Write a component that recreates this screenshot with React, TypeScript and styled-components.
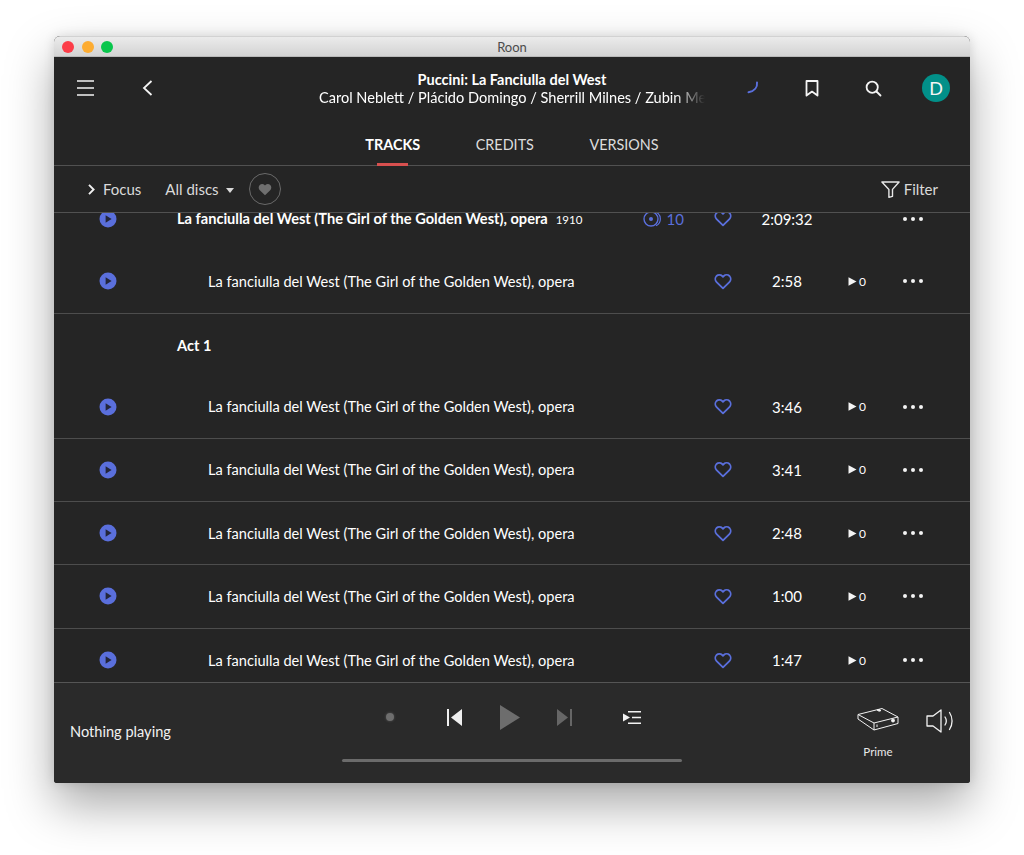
import React from "react";
import styled, { createGlobalStyle } from "styled-components";

const BLUE = "#5a6fdc";

const GlobalStyle = createGlobalStyle`
    html, body {
        margin: 0;
        background: #fff;
    }
    body {
        padding: 36px 54px 72px;
        font-family: Lato, "Liberation Sans", sans-serif;
        -webkit-font-smoothing: antialiased;
    }
`;

const Window = styled.div`
    width: 916px;
    height: 747px;
    display: flex;
    flex-direction: column;
    border-radius: 6px 6px 3px 3px;
    background: #252525;
    box-shadow: 0 22px 48px rgba(0, 0, 0, 0.34), 0 0 12px rgba(0, 0, 0, 0.12);
    overflow: hidden;
`;

const TitleBar = styled.div`
    height: 21px;
    flex: none;
    display: flex;
    align-items: center;
    justify-content: center;
    position: relative;
    background: linear-gradient(#ebebeb, #d3d3d3);
    border-top: 1px solid #d2d2d2;
    border-bottom: 1px solid #b9b9b9;
    box-sizing: border-box;
    color: #4c4c4c;
    font-size: 13px;
`;

const Lights = styled.div`
    position: absolute;
    left: 8px;
    top: 4px;
    display: flex;
    gap: 7.5px;
`;

const Light = styled.span<{ $color: string }>`
    width: 12px;
    height: 12px;
    border-radius: 50%;
    background: ${(p) => p.$color};
`;

const Header = styled.header`
    flex: none;
    height: 109px;
    display: flex;
    flex-direction: column;
    border-bottom: 1px solid #515151;
    box-sizing: border-box;
`;

const TopBar = styled.div`
    height: 63px;
    display: grid;
    grid-template-columns: 265px 386px 265px;
    align-items: center;
`;

const LeftActions = styled.div`
    display: flex;
    align-items: center;
    padding-left: 23px;
    gap: 48px;
    margin-top: -1px;
`;

const RightActions = styled.div`
    display: flex;
    align-items: center;
    padding-left: 38px;
    margin-top: -1px;
`;

const IconSlot = styled.div<{ $gap: number }>`
    width: 20px;
    margin-left: ${(p) => p.$gap}px;
    display: flex;
    justify-content: center;
    align-items: center;
    color: #f2f2f2;
`;

const Avatar = styled.div`
    width: 28px;
    height: 28px;
    margin-left: 39px;
    flex: none;
    border-radius: 50%;
    background: #029089;
    color: #f4f4f4;
    font-size: 18px;
    display: flex;
    align-items: center;
    justify-content: center;
`;

const TitleBlock = styled.div`
    min-width: 0;
    text-align: center;
    color: #fff;
    margin-top: 1px;
`;

const AlbumTitle = styled.div`
    font-size: 14.5px;
    font-weight: 700;
    line-height: 18px;
`;

const Artists = styled.div`
    font-size: 14.55px;
    line-height: 18px;
    white-space: nowrap;
    overflow: hidden;
    text-align: left;
    -webkit-mask-image: linear-gradient(to right, #000 92%, transparent 100%);
    mask-image: linear-gradient(to right, #000 92%, transparent 100%);
`;

const Tabs = styled.nav`
    flex: 1;
    display: flex;
    justify-content: center;
    gap: 55.5px;
`;

const Tab = styled.div<{ $active?: boolean }>`
    position: relative;
    font-size: 14.4px;
    line-height: 18px;
    padding-top: 16px;
    color: ${(p) => (p.$active ? "#fff" : "#dcdcdc")};
    font-weight: ${(p) => (p.$active ? 700 : 400)};

    ${(p) =>
        p.$active &&
        `&::after {
            content: "";
            position: absolute;
            left: 12px;
            right: 12px;
            bottom: -1px;
            height: 3px;
            background: #d8504f;
        }`}
`;

const Toolbar = styled.div`
    flex: none;
    height: 47px;
    display: flex;
    align-items: center;
    box-sizing: border-box;
    border-bottom: 1px solid #515151;
    padding: 0 32px 0 34px;
    font-size: 15px;
    color: #dadada;
    position: relative;
    z-index: 1;
    background: #252525;
`;

const ToolItem = styled.div`
    display: flex;
    align-items: center;
`;

const FocusLabel = styled(ToolItem)`
    gap: 8px;
    margin-right: 24px;
`;

const DiscsLabel = styled(ToolItem)`
    gap: 7px;
    margin-right: 15px;
`;

const FilterLabel = styled(ToolItem)`
    margin-left: auto;
    gap: 4px;
`;

const CaretDown = styled.span`
    width: 0;
    height: 0;
    border-left: 4.5px solid transparent;
    border-right: 4.5px solid transparent;
    border-top: 5px solid #dadada;
    margin-top: 2px;
`;

const HeartCircle = styled.div`
    width: 32px;
    height: 32px;
    border: 1px solid #6a6a6a;
    border-radius: 50%;
    box-sizing: border-box;
    display: flex;
    align-items: center;
    justify-content: center;
`;

const List = styled.div`
    flex: 1;
    min-height: 0;
    overflow: hidden;
`;

const ListInner = styled.div`
    margin-top: -26px;
`;

const Row = styled.div<{ $border?: boolean }>`
    height: 63.25px;
    box-sizing: border-box;
    display: grid;
    grid-template-columns: 45px 18px 586px 40px 88px 52px 60px 27px;
    align-items: center;
    border-bottom: ${(p) => (p.$border ? "1px solid #4d4d4d" : "none")};
    color: #fff;
    font-size: 15px;

    & > * {
        grid-row: 1;
    }
`;

const SectionRow = styled(Row)`
    height: 62px;
    padding-top: 2px;
`;

const PlayCell = styled.div`
    grid-column: 2;
    display: flex;
`;

const TrackName = styled.div<{ $indent: number; $bold?: boolean }>`
    grid-column: 3;
    padding-left: ${(p) => p.$indent}px;
    font-weight: ${(p) => (p.$bold ? 700 : 400)};
    white-space: nowrap;
    font-size: 14.6px;
`;

const Year = styled.span`
    font-size: 11.5px;
    margin-left: 8px;
    font-weight: 400;
`;

const Versions = styled.div`
    grid-column: 3;
    justify-self: end;
    display: flex;
    align-items: center;
    gap: 4px;
    color: ${BLUE};
    font-size: 15px;
    margin-right: 19px;
`;

const HeartCell = styled.div`
    grid-column: 4;
    display: flex;
    justify-content: center;
`;

const Duration = styled.div`
    grid-column: 5;
    text-align: center;
    font-size: 15px;
`;

const PlayCount = styled.div`
    grid-column: 6;
    display: flex;
    align-items: center;
    justify-content: center;
    gap: 2px;
    font-size: 12px;
`;

const MoreCell = styled.div`
    grid-column: 7;
    display: flex;
    justify-content: center;
    gap: 4px;
`;

const Dot = styled.span`
    width: 4px;
    height: 4px;
    border-radius: 50%;
    background: #f4f4f4;
`;

const Footer = styled.footer`
    flex: none;
    height: 101px;
    box-sizing: border-box;
    border-top: 1px solid #555;
    background: #2a2a2a;
    display: grid;
    grid-template-columns: 270px 376px 270px;
    position: relative;
    z-index: 1;
`;

const NowPlaying = styled.div`
    padding: 40px 0 0 16px;
    font-size: 14.6px;
    line-height: 18px;
    color: #f2f2f2;
`;

const Center = styled.div`
    display: flex;
    flex-direction: column;
    align-items: center;
`;

const Transport = styled.div`
    height: 66px;
    width: 100%;
    display: flex;
    align-items: center;
    padding-top: 2px;
    box-sizing: border-box;
`;

const TransportSlot = styled.div<{ $left: number }>`
    margin-left: ${(p) => p.$left}px;
    width: 20px;
    display: flex;
    justify-content: center;
`;

const RecDot = styled.span`
    width: 8px;
    height: 8px;
    border-radius: 50%;
    background: #6e6e6e;
    box-shadow: 0 0 2px 1px #3e3e3e;
`;

const Progress = styled.div`
    width: 340px;
    height: 3px;
    border-radius: 2px;
    background: #6b6b6b;
    margin-top: 10px;
`;

const Outputs = styled.div`
    display: flex;
    justify-content: flex-end;
    padding: 24px 15px 0 0;
    gap: 27px;
    color: #e8e8e8;
`;

const Device = styled.div`
    display: flex;
    flex-direction: column;
    align-items: center;
    gap: 14px;
    font-size: 11.5px;
    line-height: 14px;
`;

const VolumeSlot = styled.div`
    padding-top: 2px;
`;

const PlayCircle = () => (
    <svg width="18" height="18" viewBox="0 0 18 18">
        <circle cx="9" cy="9" r="8.5" fill={BLUE} />
        <path d="M6.6 5.2 12.6 9l-6 3.8z" fill="#23263a" />
    </svg>
);

const HeartOutline = ({ color = BLUE }: { color?: string }) => (
    <svg width="18" height="17" viewBox="0 0 18 17" fill="none">
        <path
            d="M9 15.4 2.600 9.100C.9 7.400.9 4.700 2.500 3c1.600-1.600 4.100-1.600 5.700 0l.8.900.8-.900c1.600-1.600 4.100-1.600 5.700 0 1.600 1.700 1.600 4.400-.1 6.100z"
            stroke={color}
            strokeWidth="1.8"
            strokeLinejoin="round"
        />
    </svg>
);

const HeartSolid = () => (
    <svg width="14" height="13" viewBox="0 0 18 17">
        <path
            d="M9 16 2.200 9.400C.3 7.500.3 4.500 2.100 2.600c1.800-1.800 4.600-1.800 6.300 0l.6.700.6-.7c1.700-1.800 4.500-1.800 6.300 0 1.800 1.900 1.800 4.900-.1 6.800z"
            fill="#6f6f6f"
        />
    </svg>
);

const Menu = () => (
    <svg width="17" height="16" viewBox="0 0 17 16" stroke="#f4f4f4" strokeWidth="1.6">
        <path d="M0 1h17M0 8h17M0 15h17" />
    </svg>
);

const Back = () => (
    <svg width="11" height="16" viewBox="0 0 11 16" fill="none" stroke="#f4f4f4" strokeWidth="1.8">
        <path d="M9.500 1 2 8l7.500 7" />
    </svg>
);

const Spinner = () => (
    <svg width="12" height="14" viewBox="0 0 12 14" fill="none" stroke={BLUE} strokeWidth="2" strokeLinecap="round">
        <path d="M10 1.500c.6 4.500-2.400 8.600-8.500 9.800" />
    </svg>
);

const Bookmark = () => (
    <svg width="14" height="17" viewBox="0 0 14 17" fill="none" stroke="#f4f4f4" strokeWidth="1.8" strokeLinejoin="round">
        <path d="M1.500 1h11v14.600L7 11.600l-5.500 4z" />
    </svg>
);

const Search = () => (
    <svg width="17" height="17" viewBox="0 0 17 17" fill="none" stroke="#f4f4f4" strokeWidth="1.8" strokeLinecap="round">
        <circle cx="7.200" cy="7.200" r="5.600" />
        <path d="m11.500 11.500 4 4" />
    </svg>
);

const ChevronRight = () => (
    <svg width="7" height="11" viewBox="0 0 7 11" fill="none" stroke="#f0f0f0" strokeWidth="1.9">
        <path d="m1 .8 4.600 4.700L1 10.200" />
    </svg>
);

const FunnelIcon = () => (
    <svg width="19" height="17" viewBox="0 0 19 17" fill="none" stroke="#e8e8e8" strokeWidth="1.4" strokeLinejoin="round">
        <path d="M.9 1h17.200l-6.600 7.400v6.900l-3.600 1V8.400z" />
    </svg>
);

const Discs = () => (
    <svg width="20" height="16" viewBox="0 0 20 16" fill="none" stroke={BLUE}>
        <circle cx="8" cy="8" r="7" strokeWidth="1.400" />
        <circle cx="8" cy="8" r="2" fill={BLUE} stroke="none" />
        <path d="M13 1.200c5.800 2.600 5.800 11 0 13.600" strokeWidth="1.200" />
    </svg>
);

const SmallPlay = () => (
    <svg width="9" height="9" viewBox="0 0 9 9">
        <path d="M.5.3 8.500 4.500.5 8.700z" fill="#f4f4f4" />
    </svg>
);

const Prev = () => (
    <svg width="15" height="17" viewBox="0 0 15 17">
        <path d="M0 0h2v17H0zM15 0v17L4 8.500z" fill="#efefef" />
    </svg>
);

const PlayBig = () => (
    <svg width="20" height="25" viewBox="0 0 20 25">
        <path d="M0 0 20 12.500 0 25z" fill="#6d6d6d" />
    </svg>
);

const Next = () => (
    <svg width="15" height="17" viewBox="0 0 15 17">
        <path d="M0 0v17l11-8.500z" fill="#666" />
        <path d="M13 0h2v17h-2z" fill="#666" />
    </svg>
);

const Queue = () => (
    <svg width="18" height="13" viewBox="0 0 18 13" fill="#f2f2f2">
        <path d="M0 2.500v8l7-4zM5 0h13v1.600H5zM9 5.700h9v1.600H9zM5 11.400h13V13H5z" />
    </svg>
);

const PrimeBox = () => (
    <svg width="42" height="24" viewBox="0 0 42 24" fill="none" stroke="#f2f2f2" strokeWidth="1" strokeLinejoin="round">
        <path d="M1 7.500 25 1.500l16 8.500-24 6z" />
        <path d="M1 7.500V12l16 11 24-6.500V10" />
        <path d="M17 16v7" />
        <circle cx="36" cy="13.500" r="1.500" fill="#f2f2f2" />
        <path d="M20 2.900l2-.5 2 1.200-2 .6z" fill="#f2f2f2" />
        <path d="M20 20v-2.500" />
    </svg>
);

const Speaker = () => (
    <svg width="29" height="24" viewBox="0 0 29 24" fill="none" stroke="#f2f2f2" strokeWidth="1.300" strokeLinejoin="round" strokeLinecap="round">
        <path d="M1 7h6l8-6v22l-8-6H1z" />
        <path d="M19 8c1.600 2.400 1.600 5.600 0 8" />
        <path d="M23.500 3.500c3.400 5 3.400 12 0 17" />
    </svg>
);

const PLAIN = "La fanciulla del West (The Girl of the Golden West), opera";

const Track = ({ duration, border = true }: { duration: string; border?: boolean }) => (
    <Row $border={border}>
        <PlayCell>
            <PlayCircle />
        </PlayCell>
        <TrackName $indent={91}>{PLAIN}</TrackName>
        <HeartCell>
            <HeartOutline />
        </HeartCell>
        <Duration>{duration}</Duration>
        <PlayCount>
            <SmallPlay />0
        </PlayCount>
        <MoreCell>
            <Dot />
            <Dot />
            <Dot />
        </MoreCell>
    </Row>
);

export default function App() {
    return (
        <>
            <GlobalStyle />
            <Window>
                <TitleBar>
                    <Lights>
                        <Light $color="#fc3d48" />
                        <Light $color="#fdac31" />
                        <Light $color="#09c64c" />
                    </Lights>
                    Roon
                </TitleBar>
                <Header>
                    <TopBar>
                        <LeftActions>
                            <Menu />
                            <Back />
                        </LeftActions>
                        <TitleBlock>
                            <AlbumTitle>Puccini: La Fanciulla del West</AlbumTitle>
                            <Artists>Carol Neblett / Plácido Domingo / Sherrill Milnes / Zubin Mehta</Artists>
                        </TitleBlock>
                        <RightActions>
                            <IconSlot $gap={0}>
                                <Spinner />
                            </IconSlot>
                            <IconSlot $gap={39}>
                                <Bookmark />
                            </IconSlot>
                            <IconSlot $gap={41}>
                                <Search />
                            </IconSlot>
                            <Avatar>D</Avatar>
                        </RightActions>
                    </TopBar>
                    <Tabs>
                        <Tab $active>TRACKS</Tab>
                        <Tab>CREDITS</Tab>
                        <Tab>VERSIONS</Tab>
                    </Tabs>
                </Header>
                <Toolbar>
                    <FocusLabel>
                        <ChevronRight />
                        Focus
                    </FocusLabel>
                    <DiscsLabel>
                        All discs
                        <CaretDown />
                    </DiscsLabel>
                    <HeartCircle>
                        <HeartSolid />
                    </HeartCircle>
                    <FilterLabel>
                        <FunnelIcon />
                        Filter
                    </FilterLabel>
                </Toolbar>
                <List>
                    <ListInner>
                        <Row>
                            <PlayCell>
                                <PlayCircle />
                            </PlayCell>
                            <TrackName $indent={60} $bold>
                                {PLAIN}
                                <Year>1910</Year>
                            </TrackName>
                            <Versions>
                                <Discs />
                                10
                            </Versions>
                            <HeartCell>
                                <HeartOutline />
                            </HeartCell>
                            <Duration>2:09:32</Duration>
                            <MoreCell>
                                <Dot />
                                <Dot />
                                <Dot />
                            </MoreCell>
                        </Row>
                        <Track duration="2:58" />
                        <SectionRow>
                            <TrackName $indent={60} $bold>
                                Act 1
                            </TrackName>
                        </SectionRow>
                        <Track duration="3:46" />
                        <Track duration="3:41" />
                        <Track duration="2:48" />
                        <Track duration="1:00" />
                        <Track duration="1:47" border={false} />
                    </ListInner>
                </List>
                <Footer>
                    <NowPlaying>Nothing playing</NowPlaying>
                    <Center>
                        <Transport>
                            <TransportSlot $left={56}>
                                <RecDot />
                            </TransportSlot>
                            <TransportSlot $left={44}>
                                <Prev />
                            </TransportSlot>
                            <TransportSlot $left={36}>
                                <PlayBig />
                            </TransportSlot>
                            <TransportSlot $left={34}>
                                <Next />
                            </TransportSlot>
                            <TransportSlot $left={48}>
                                <Queue />
                            </TransportSlot>
                        </Transport>
                        <Progress />
                    </Center>
                    <Outputs>
                        <Device>
                            <PrimeBox />
                            Prime
                        </Device>
                        <VolumeSlot>
                            <Speaker />
                        </VolumeSlot>
                    </Outputs>
                </Footer>
            </Window>
        </>
    );
}
